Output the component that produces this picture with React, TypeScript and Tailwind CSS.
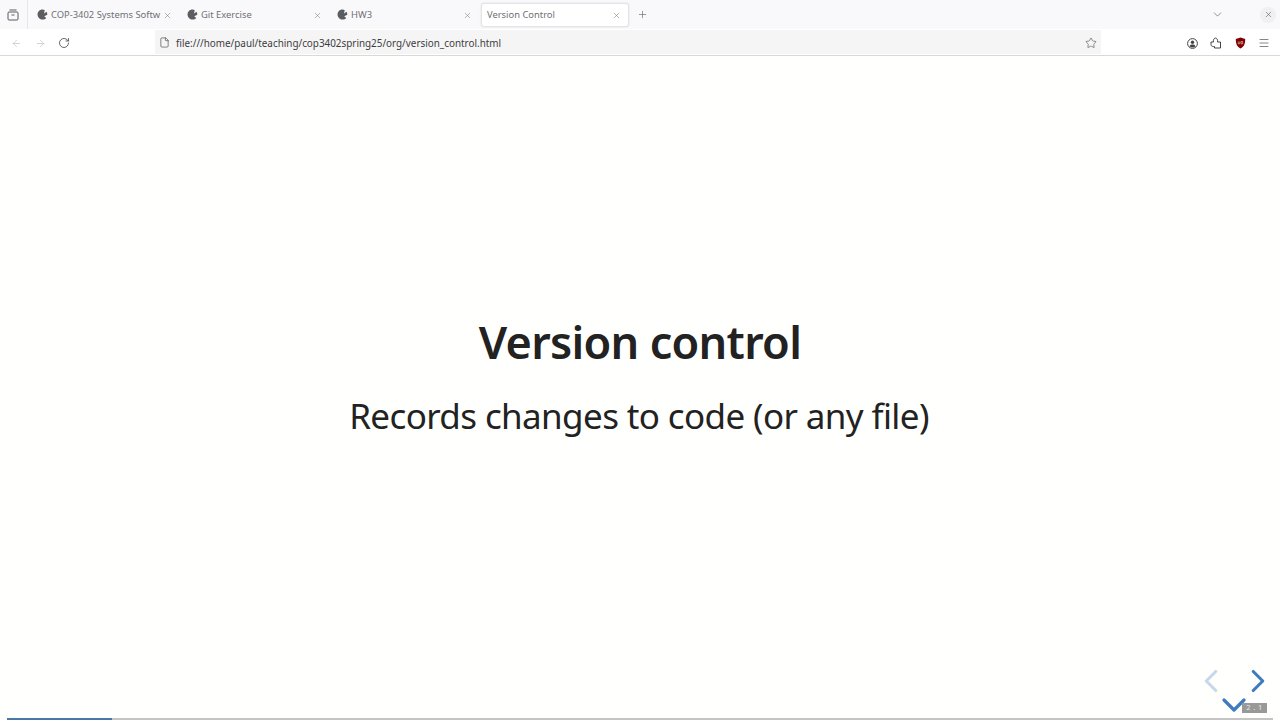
import { ChevronDown, ChevronLeft, ChevronRight, Plus, X, ArrowLeft, ArrowRight, RotateCw, Star, Menu, File } from 'lucide-react'

function Favicon() {
  return (
    <svg width="11" height="11" viewBox="0 0 10 10" className="shrink-0">
      <path d="M5 .4C2.400.4.500 2.400.500 5s2 4.600 4.600 4.600c1.300 0 2.500-.6 3.300-1.500L6.600 6.700 9.400 5.200C9.500 4.400 9.200 3.400 8.600 2.600L6.400 4.200 7 1C6.400.6 5.700.4 5 .4Z" fill="#5c5d61" />
    </svg>
  )
}

const tabs = ['COP-3402 Systems Softw', 'Git Exercise', 'HW3']

function ToolbarIcon({ children }: { children: React.ReactNode }) {
  return <div className="mt-[2px] flex h-6 w-6 items-center justify-center">{children}</div>
}

export default function App() {
  return (
    <div className="flex h-[720px] w-[1280px] flex-col overflow-hidden bg-[#fffffd] font-['Noto_Sans',sans-serif]">
      <div className="flex h-[29px] shrink-0 items-center bg-[#f9f9fb] pr-1 text-[9.4px] text-[#707074]">
        <div className="flex h-[29px] w-[28px] items-center justify-center border-r border-[#e6e6e8] pr-[2px]">
          <svg width="12" height="12" viewBox="0 0 12 12" fill="none" stroke="#5b5b60" strokeWidth="1">
            <rect x="1" y="3" width="10" height="8" rx="1" />
            <path d="M2.500 1h7M4.500 6h3" />
          </svg>
        </div>
        <div className="ml-[6px] flex items-center">
          {tabs.map((title) => (
            <div key={title} className="flex w-[150px] items-center pl-[3px]">
              <Favicon />
              <span className="ml-[3px] mt-[2px] w-[110px] whitespace-nowrap">
                {title}
              </span>
              <X size={9} strokeWidth={1.4} className="ml-[2px] mt-[2px] shrink-0 text-[#77777b]" />
            </div>
          ))}
          <div className="ml-[-3px] flex h-[24px] w-[148px] items-center justify-between rounded-[3px] border border-[#e4e4e6] bg-white pl-[5px] pr-[7px] shadow-[0_0_2px_rgba(0,0,0,0.12)]">
            <span className="mt-[2px]">Version Control</span>
            <X size={9} strokeWidth={1.4} className="mt-[2px] text-[#77777b]" />
          </div>
          <Plus size={11} strokeWidth={1.4} className="ml-[8px] text-[#66666a]" />
        </div>
        <div className="ml-auto flex items-center">
          <ChevronDown size={13} strokeWidth={1.3} className="text-[#66666a]" />
          <div className="ml-[36px] flex h-4 w-4 items-center justify-center rounded-full bg-[#f0f0f2]">
            <X size={9} strokeWidth={1.5} className="text-[#55555a]" />
          </div>
        </div>
      </div>

      <div className="flex h-[27px] shrink-0 items-center border-b border-[#d9d9d9] bg-white px-[4px]">
        <div className="flex w-[151px] items-center">
          <ToolbarIcon><ArrowLeft size={11} strokeWidth={1.3} className="text-[#b8b8bc]" /></ToolbarIcon>
          <ToolbarIcon><ArrowRight size={11} strokeWidth={1.3} className="text-[#b8b8bc]" /></ToolbarIcon>
          <ToolbarIcon><RotateCw size={12} strokeWidth={1.6} className="text-[#444448]" /></ToolbarIcon>
        </div>
        <div className="flex h-[24px] w-[946px] items-center justify-between bg-[#f5f5f6] pl-[4px] pr-[4px] text-[9.9px] text-[#3c3c40]">
          <div className="flex items-center">
            <File size={11} strokeWidth={1.4} className="mt-[2px] text-[#444448]" />
            <span className="ml-[6px] mt-[2px]">file:///home/paul/teaching/cop3402spring25/org/version_control.html</span>
          </div>
          <Star size={12} strokeWidth={1.3} className="mt-[2px] text-[#55555a]" />
        </div>
        <div className="ml-auto flex items-center">
          <ToolbarIcon>
            <svg width="11" height="11" viewBox="0 0 11 11">
              <circle cx="5.500" cy="5.500" r="4.900" fill="none" stroke="#444448" strokeWidth="1" />
              <circle cx="5.500" cy="4.200" r="1.700" fill="#444448" />
              <path d="M2.500 8.300C3 6.900 4.200 6.500 5.500 6.500s2.500.4 3 1.800C7.700 9.100 6.700 9.500 5.500 9.500s-2.200-.4-3-1.200Z" fill="#444448" />
            </svg>
          </ToolbarIcon>
          <ToolbarIcon>
            <svg width="12" height="12" viewBox="0 0 12 12" fill="none" stroke="#444448" strokeWidth="1" strokeLinejoin="round">
              <path d="M1 5h2.500C3 2.800 4.200 1 5.500 1S8 2.800 7.500 5H10.500v6H4.500V9.500C3 10 1 9 1 7.700Z" />
            </svg>
          </ToolbarIcon>
          <ToolbarIcon>
            <svg width="11" height="12" viewBox="0 0 11 12">
              <path d="M5.500.6 10.200 2c0 4.600-1 7.700-4.700 9.400C1.800 9.700.8 6.600.8 2Z" fill="#800000" />
              <path d="M3.300 4.500v2.300h1.500V4.500M6 4.500h1.700v2.300H6Z" fill="none" stroke="#f2d7d7" strokeWidth=".6" />
            </svg>
          </ToolbarIcon>
          <ToolbarIcon><Menu size={12} strokeWidth={1.3} className="text-[#444448]" /></ToolbarIcon>
        </div>
      </div>

      <main className="relative flex flex-1 flex-col items-center text-[#222222]">
        <h1 className="mt-[257px] text-[45px] font-semibold leading-[58px] tracking-[-0.7px]">Version control</h1>
        <p className="mt-[22px] pr-[2px] text-[35px] font-normal leading-[46px] tracking-[-0.62px]">Records changes to code (or any file)</p>

        <ChevronLeft size={38} strokeWidth={2} className="absolute right-[50px] bottom-[20px] text-[#c7d8ea]" />
        <ChevronRight size={38} strokeWidth={2} className="absolute right-[3px] bottom-[20px] text-[#3f7cbf]" />
        <ChevronDown size={40} strokeWidth={2} className="absolute right-[26px] bottom-[-5px] text-[#3f7cbf]" />
        <div className="absolute bottom-[7px] right-[13px] flex h-[10px] w-[25px] items-center justify-center bg-[#999999] text-[7.5px] tracking-[0.4px] text-[#e8e8e8]">2 . 1</div>

        <div className="absolute bottom-0 left-[7px] right-[7px] h-[2px] bg-[#c4c4c4]">
          <div className="h-full w-[105px] bg-[#4a76a8]" />
        </div>
      </main>
    </div>
  )
}
